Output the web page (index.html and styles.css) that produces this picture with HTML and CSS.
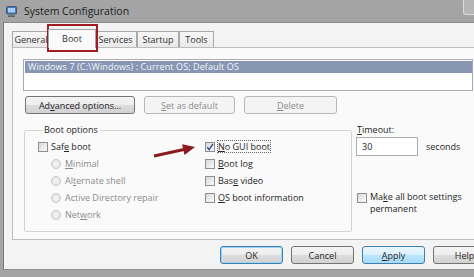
FILE: index.html
```html
<!DOCTYPE html>
<html lang="en">
<head>
    <meta charset="UTF-8">
    <title>System Configuration</title>
    <link rel="stylesheet" href="styles.css">
</head>
<body>
    <div class="titlebar">
        <svg class="app-icon" viewBox="0 0 11 11">
            <rect x="0.5" y="0.5" width="10" height="7.5" rx="1" fill="#3d78c8" stroke="#4b5567"/>
            <rect x="2" y="2" width="7" height="4.5" fill="#a9cdf3"/>
            <rect x="3.5" y="8" width="4" height="2" fill="#7a808a"/>
            <rect x="2" y="9.6" width="7" height="1.2" fill="#4b5567"/>
        </svg>
        <span class="title">System Configuration</span>
        <span class="close"></span>
    </div>

    <div class="window">
        <div class="tabs">
            <div class="tab general">General</div>
            <div class="tab boot active">Boot</div>
            <div class="tab services">Services</div>
            <div class="tab startup">Startup</div>
            <div class="tab tools">Tools</div>
        </div>

        <div class="panel">
            <div class="listbox">
                <div class="item selected">Windows 7 (C:\Windows) : Current OS; Default OS</div>
            </div>

            <div class="btn-row">
                <button class="btn advanced">Ad<u>v</u>anced options...</button>
                <button class="btn set-default" disabled><u>S</u>et as default</button>
                <button class="btn delete" disabled><u>D</u>elete</button>
            </div>

            <div class="lower">
                <fieldset class="group">
                    <legend>Boot options</legend>
                    <div class="cols">
                        <div class="col left">
                            <div class="row"><span class="check"></span><span>Saf<u>e</u> boot</span></div>
                            <div class="row sub"><span class="radio"></span><span><u>M</u>inimal</span></div>
                            <div class="row sub"><span class="radio"></span><span>Al<u>t</u>ernate shell</span></div>
                            <div class="row sub"><span class="radio"></span><span>Active Directory repair</span></div>
                            <div class="row sub"><span class="radio"></span><span>Net<u>w</u>ork</span></div>
                        </div>
                        <div class="col right">
                            <div class="row">
                                <span class="check checked">
                                    <svg viewBox="0 0 8 8"><path d="M1.2 4.2 L3.2 6.6 L7 0.8" fill="none" stroke="#34498a" stroke-width="1.4"/></svg>
                                </span>
                                <span class="focus"><u>N</u>o GUI boot</span>
                            </div>
                            <div class="row"><span class="check"></span><span><u>B</u>oot log</span></div>
                            <div class="row"><span class="check"></span><span>Bas<u>e</u> video</span></div>
                            <div class="row"><span class="check"></span><span><u>O</u>S boot information</span></div>
                        </div>
                    </div>
                </fieldset>

                <div class="side">
                    <div class="timeout-label"><u>T</u>imeout:</div>
                    <div class="timeout-row">
                        <div class="input">30</div>
                        <span class="unit">seconds</span>
                    </div>
                    <div class="row perm">
                        <span class="check"></span>
                        <span>Ma<u>k</u>e all boot settings<br>permanent</span>
                    </div>
                </div>
            </div>
        </div>

        <div class="dlg-buttons">
            <button class="btn dlg default">OK</button>
            <button class="btn dlg">Cancel</button>
            <button class="btn dlg hot"><u>A</u>pply</button>
            <button class="btn dlg">Help</button>
        </div>
    </div>

    <div class="mark-box"></div>
    <svg class="arrow" viewBox="0 0 50 20">
        <line x1="4" y1="16" x2="35" y2="9.2" stroke="#8c1a1f" stroke-width="3"/>
        <polygon points="45,7 34.5,15 32.1,4.2" fill="#8c1a1f"/>
    </svg>
</body>
</html>
```

FILE: styles.css
```css
body {
    margin: 0;
    width: 474px;
    height: 277px;
    overflow: hidden;
    position: relative;
    background: #a4a4a4;
    font-family: "Open Sans", "Liberation Sans", sans-serif;
    font-size: 9px;
    color: #262626;
}
u {
    text-decoration-thickness: 1px;
    text-underline-offset: 1px;
}

/* title bar */
.titlebar {
    height: 22px;
    display: flex;
    align-items: center;
    padding-left: 6px;
}
.app-icon {
    width: 11px;
    height: 11px;
    margin-right: 7px;
}
.title {
    font-size: 10.5px;
    color: #1c1c1c;
}
.close {
    margin-left: auto;
    align-self: flex-start;
    width: 10px;
    height: 14px;
    border-left: 1px solid #dcdcdc;
    border-bottom: 1px solid #dcdcdc;
    border-radius: 0 0 0 3px;
    background: #b6b6b6;
}

/* dialog body */
.window {
    margin-left: 3px;
    height: 248px;
    box-sizing: border-box;
    border-left: 1px solid #777;
    border-top: 1px solid #8a8a8a;
    border-bottom: 1px solid #8e8e8e;
    background: #f3f3f3;
    padding-left: 8px;
    overflow: hidden;
}

.tabs {
    height: 24px;
    display: flex;
    align-items: flex-end;
}
.tab {
    height: 16px;
    box-sizing: border-box;
    border: 1px solid #a9a9a9;
    border-bottom: none;
    background: linear-gradient(#f7f7f7, #e9e9e9);
    display: flex;
    align-items: center;
    justify-content: center;
    color: #333;
}
.general { width: 38px; }
.services { width: 43px; }
.startup { width: 42px; }
.tools { width: 35px; }
.tab.active {
    width: 48px;
    height: 19px;
    margin: 0 -2px -1px -2px;
    position: relative;
    z-index: 1;
    background: #fafafa;
    border-color: #a4a4a4;
    padding-bottom: 2px;
}

.panel {
    height: 193px;
    box-sizing: border-box;
    border: 1px solid #bdbdbd;
    border-right: none;
    background: #fafafa;
    padding: 11px 0 0 10px;
}

.listbox {
    width: 450px;
    height: 32px;
    box-sizing: border-box;
    border: 1px solid #a9acb3;
    background: #fff;
    padding: 1px 0 0 1px;
}
.item {
    height: 12px;
    line-height: 12px;
    padding-left: 3px;
    white-space: nowrap;
    letter-spacing: 0.1px;
}
.item.selected {
    background: #8797b3;
    color: #f3f5fa;
}

.btn-row {
    display: flex;
    gap: 9px;
    margin: 5px 0 0 2px;
}
.btn {
    height: 18px;
    box-sizing: border-box;
    border: 1px solid #737373;
    border-radius: 3px;
    background: linear-gradient(#f4f4f4, #ececec 50%, #dcdcdc 51%, #d2d2d2);
    font: inherit;
    color: #262626;
    padding: 0;
    flex: none;
}
.btn:disabled {
    border-color: #b5b8ba;
    background: #f4f4f4;
    color: #8c8c8c;
}
.advanced { width: 110px; }
.set-default { width: 91px; }
.delete { width: 93px; }

/* boot options */
.lower {
    display: flex;
    margin: 10px 0 0 1px;
}
.group {
    width: 328px;
    height: 108px;
    box-sizing: border-box;
    margin: 0;
    padding: 2px 0 0 13px;
    border: 1px solid #d3d3d3;
    border-radius: 2px;
}
.group legend {
    padding: 0 2px;
    margin-left: 4px;
    line-height: 12px;
}
.cols {
    display: flex;
}
.col.left {
    width: 167px;
}
.row {
    display: flex;
    align-items: center;
    height: 17px;
    gap: 3px;
    white-space: nowrap;
}
.check {
    width: 10px;
    height: 10px;
    box-sizing: border-box;
    border: 1px solid #8e8f8f;
    background: linear-gradient(135deg, #d9d9d9, #fbfbfb);
    flex: none;
    display: flex;
}
.check svg {
    width: 8px;
    height: 8px;
}
.focus {
    outline: 1px dotted #666;
    line-height: 11px;
}
.sub {
    margin-left: 13px;
    gap: 4px;
    color: #8b8b8b;
}
.radio {
    width: 10px;
    height: 10px;
    box-sizing: border-box;
    border-radius: 50%;
    border: 1px solid #c6c6c6;
    background: radial-gradient(#f6f6f6, #e0e0e0);
    flex: none;
}

.side {
    margin-left: 4px;
}
.timeout-label {
    line-height: 12px;
    margin-left: 1px;
}
.timeout-row {
    display: flex;
    align-items: center;
    margin-top: 1px;
}
.input {
    width: 62px;
    height: 19px;
    box-sizing: border-box;
    border: 1px solid #abadb3;
    background: #fff;
    padding-left: 5px;
    line-height: 17px;
}
.unit {
    margin-left: 8px;
}
.perm {
    height: auto;
    align-items: flex-start;
    margin: 35px 0 0 1px;
    line-height: 12px;
}
.perm .check {
    margin-top: 2px;
}

/* dialog buttons */
.dlg-buttons {
    display: flex;
    gap: 8px;
    margin: 6px 0 0 208px;
}
.dlg {
    width: 63px;
}
.dlg.default {
    border-color: #3c7fb1;
    box-shadow: inset 0 0 0 1px #9fd3f4;
}
.dlg.hot {
    border-color: #3c7fb1;
    background: linear-gradient(#eaf6fd, #d9f0fc 50%, #bee6fd 51%, #a7d9f5);
}

/* annotations drawn over the screenshot */
.mark-box {
    position: absolute;
    left: 47px;
    top: 24px;
    width: 51px;
    height: 28px;
    box-sizing: border-box;
    border: 2px solid #a11d24;
}
.arrow {
    position: absolute;
    left: 150px;
    top: 140px;
    width: 50px;
    height: 20px;
}
```
